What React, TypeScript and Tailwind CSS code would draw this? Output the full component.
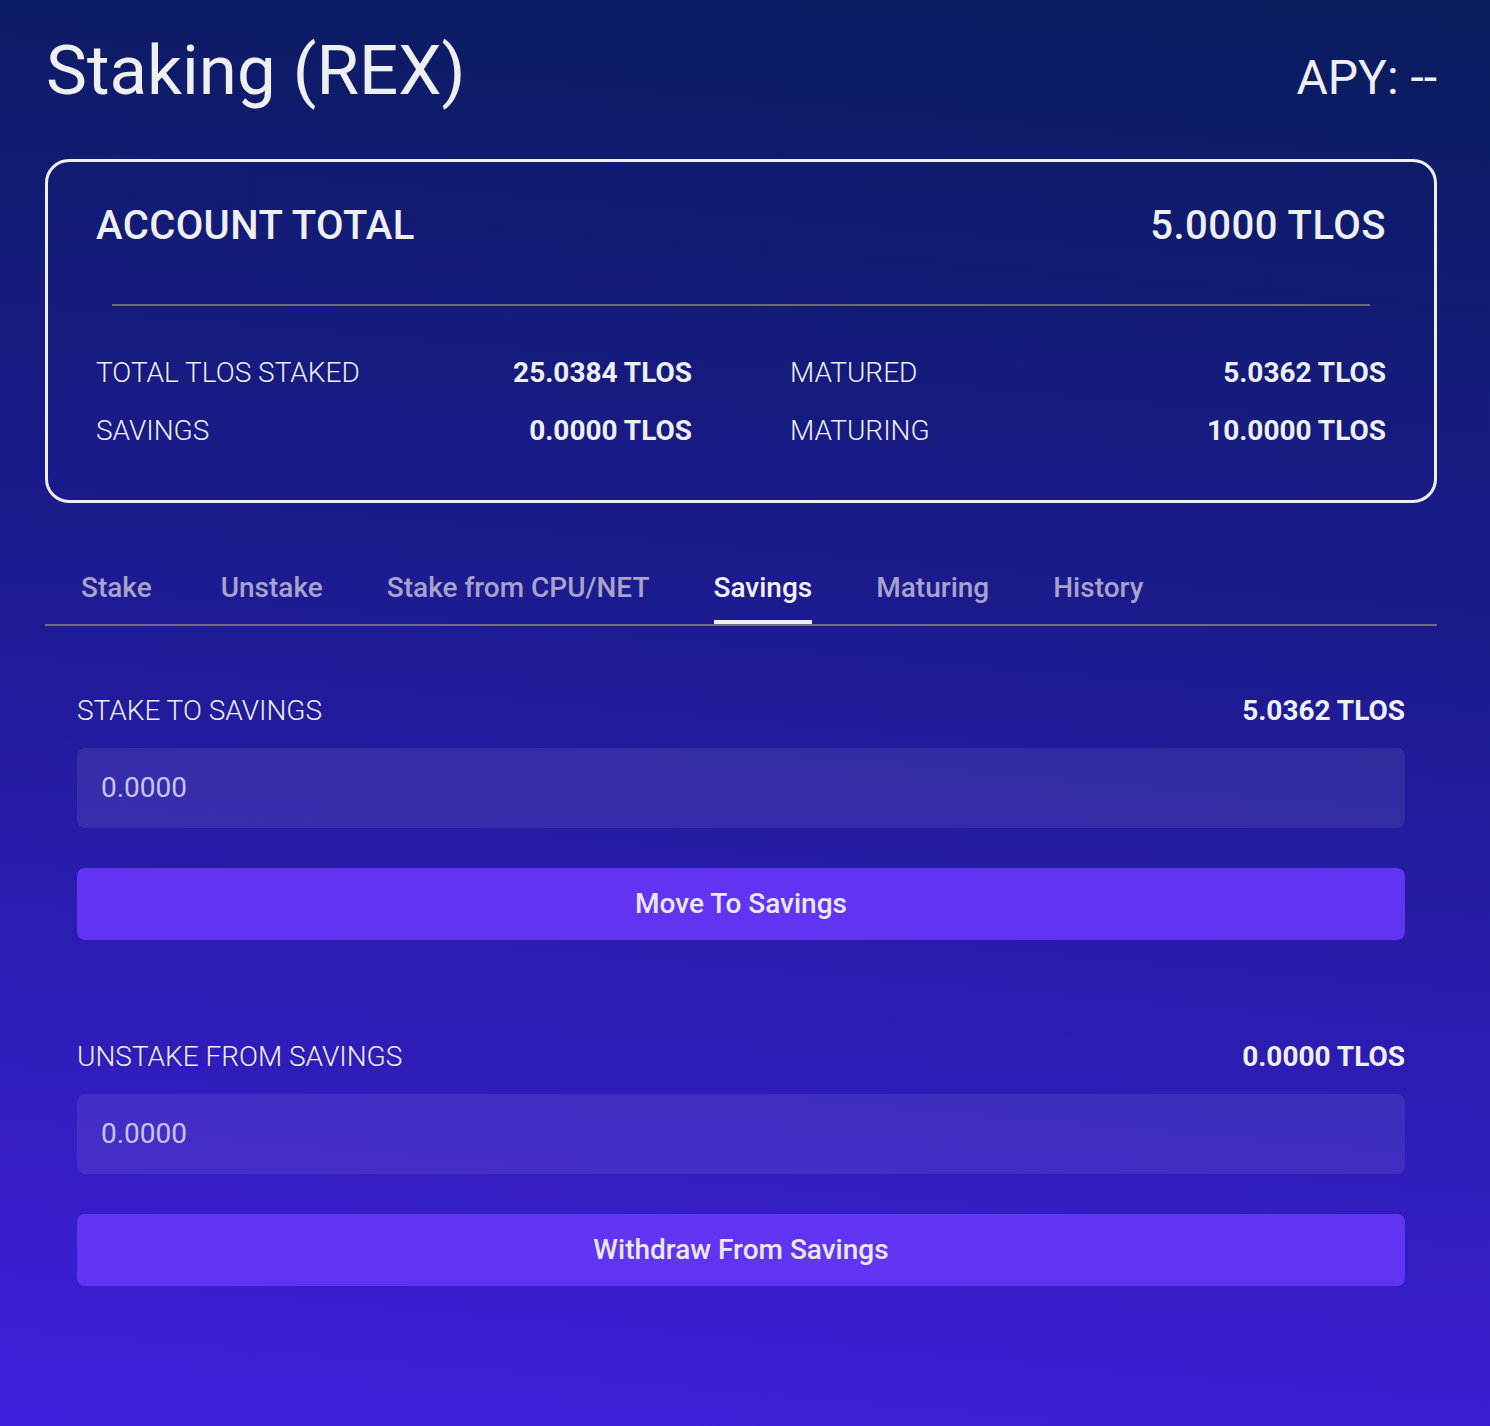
import React from "react";

const font = { fontFamily: "Roboto, 'Noto Sans', sans-serif" };

function StatRow({ label, value }: { label: string; value: string }) {
  return (
    <div className="flex items-center justify-between h-[40px]">
      <span className="text-[28px] font-light leading-[40px]">{label}</span>
      <span className="text-[28px] font-bold leading-[40px]">{value}</span>
    </div>
  );
}

function Section({ label, value, button }: { label: string; value: string; button: string }) {
  return (
    <div className="flex flex-col">
      <div className="flex items-center justify-between h-[40px]">
        <span className="text-[28px] font-light leading-[40px]">{label}</span>
        <span className="text-[28px] font-bold leading-[40px]">{value}</span>
      </div>
      <div className="mt-[17px] h-[80px] rounded-[8px] bg-white/[0.08] flex items-center pl-[24px]">
        <span className="text-[28px] text-[#c9c4ee]">0.0000</span>
      </div>
      <button className="mt-[40px] h-[72px] rounded-[8px] bg-[#6134f2] text-[28px] font-medium text-[#ebe8f5]">
        {button}
      </button>
    </div>
  );
}

export default function App() {
  const tabs = ["Stake", "Unstake", "Stake from CPU/NET", "Savings", "Maturing", "History"];
  return (
    <div
      className="min-h-[1426px] w-full bg-[linear-gradient(185deg,#091c5c_0%,#1d1b92_45%,#3e1fdc_100%)] text-[#efefef]"
      style={font}
    >
      <div className="ml-[45px] w-[1392px] pt-[31px]">
        <div className="flex items-baseline justify-between">
          <h1 className="text-[69px] leading-[80px] font-normal pl-[1px]">Staking (REX)</h1>
          <span className="text-[48px] leading-[56px] font-normal">APY: --</span>
        </div>

        <div className="mt-[48px] border-[3px] border-[#eeeeee] rounded-[24px] px-[48px] pt-[40px] pb-[49px]">
          <div className="flex items-center justify-between h-[48px]">
            <span className="text-[40px] font-medium leading-[48px] tracking-[0.4px]">ACCOUNT TOTAL</span>
            <span className="text-[40px] font-medium leading-[48px] tracking-[0.5px]">5.0000 TLOS</span>
          </div>
          <div className="mx-[16px] mt-[54px] h-[2px] bg-[#6b6b78]" />
          <div className="mt-[47px] grid grid-cols-2 gap-x-[98px] gap-y-[18px]">
            <StatRow label="TOTAL TLOS STAKED" value="25.0384 TLOS" />
            <StatRow label="MATURED" value="5.0362 TLOS" />
            <StatRow label="SAVINGS" value="0.0000 TLOS" />
            <StatRow label="MATURING" value="10.0000 TLOS" />
          </div>
        </div>

        <div className="mt-[65px] flex pl-[36px] border-b-2 border-[#6e6e80]">
          {tabs.map((t, i) => (
            <div
              key={t}
              className={
                (i === 0 ? "" : i === 1 ? "ml-[69px] " : "ml-[64px] ") +
                (t === "Savings"
                  ? "pb-[12px] border-b-4 border-[#f0f0f0] text-[28px] font-medium leading-[40px] text-[#f2f2f2]"
                  : "pb-[12px] border-b-4 border-transparent text-[28px] font-medium leading-[40px] text-[#a7a3c9]")
              }
            >
              {t}
            </div>
          ))}
        </div>

        <div className="px-[32px] pt-[65px] flex flex-col gap-[97px]">
          <Section label="STAKE TO SAVINGS" value="5.0362 TLOS" button="Move To Savings" />
          <Section label="UNSTAKE FROM SAVINGS" value="0.0000 TLOS" button="Withdraw From Savings" />
        </div>
      </div>
    </div>
  );
}
